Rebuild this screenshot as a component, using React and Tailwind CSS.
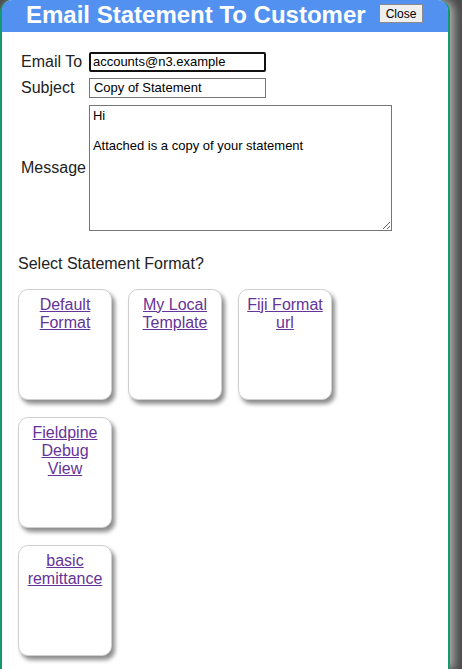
import React from "react";

const formats = [
  ["Default Format", "My Local Template", "Fiji Format url"],
  ["Fieldpine Debug View"],
  ["basic remittance"],
];

export default function App() {
  return (
    <div className="h-[669px] w-[462px] overflow-hidden bg-[#4a4a4a] font-['Liberation_Sans',Arial,sans-serif]">
      <div className="h-full w-[450px] rounded-t-[12px] border-l-2 border-r-2 border-[#14986f] bg-white shadow-[4px_0_10px_rgba(190,190,190,0.9)]">
        {/* Header */}
        <div className="flex h-[32px] items-start rounded-t-[10px] bg-[#5291f0] pl-[24px]">
          <h1 className="mt-[1px] text-[24px] font-bold leading-[28px] text-white">Email Statement To Customer</h1>
          <button className="ml-[13px] mt-[4px] h-[19px] border border-[#8a8a8a] bg-[#efefef] px-[6px] text-[12px] leading-[16px] text-black">
            Close
          </button>
        </div>

        {/* Form */}
        <div className="pl-[19px] pt-[20px] text-[16px] leading-[20px] text-[#222]">
          <div className="grid grid-cols-[auto_auto] items-center justify-start gap-x-[3px] gap-y-[6px]">
            <label>Email To</label>
            <input
              defaultValue="accounts@n3.example"
              className="h-[20px] w-[177px] rounded-[2px] border-2 border-[#111] px-[2px] text-[13px] text-black outline-none"
            />
            <label>Subject</label>
            <input
              defaultValue="Copy of Statement"
              className="h-[20px] w-[177px] border border-[#767676] px-[4px] text-[13px] text-black outline-none"
            />
            <label>Message</label>
            <textarea
              defaultValue={"Hi\n\nAttached is a copy of your statement"}
              className="mt-[1px] h-[126px] w-[303px] resize border border-[#767676] px-[3px] py-[2px] text-[13px] leading-[15px] text-black outline-none"
            />
          </div>
        </div>

        <p className="ml-[16px] mt-[21px] text-[16px] leading-[24px] text-[#222]">Select Statement Format?</p>

        {/* Format cards */}
        <div className="ml-[16px] mt-[13px] flex flex-col gap-[17px]">
          {formats.map((row, i) => (
            <div key={i} className="flex gap-[16px]">
              {row.map((name) => (
                <div
                  key={name}
                  className="h-[111px] w-[94px] rounded-[10px] border border-[#cfcfcf] bg-white px-[4px] pt-[6px] text-center text-[16px] leading-[18px] shadow-[3px_4px_4px_rgba(0,0,0,0.45)]"
                >
                  <a href="#" className="text-[#663399] underline">
                    {name}
                  </a>
                </div>
              ))}
            </div>
          ))}
        </div>
      </div>
    </div>
  );
}
